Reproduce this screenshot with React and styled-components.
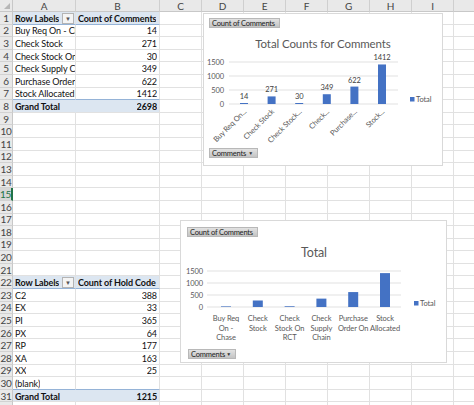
import React from "react";
import styled, { createGlobalStyle } from "styled-components";

const GlobalStyle = createGlobalStyle`
  html, body {
    margin: 0;
    padding: 0;
    background: #ffffff;
    overflow: hidden;
  }
  body {
    font-family: Lato, "Noto Sans", "Liberation Sans", sans-serif;
  }
`;

const COLS = ["A", "B", "C", "D", "E", "F", "G", "H", "I", ""];
const ROW_COUNT = 32;

const commentRows = [
  ["Buy Req On - Chase", 14],
  ["Check Stock", 271],
  ["Check Stock On RCT", 30],
  ["Check Supply Chain", 349],
  ["Purchase Order On", 622],
  ["Stock Allocated", 1412],
];

const holdRows = [
  ["C2", 388],
  ["EX", 33],
  ["PI", 365],
  ["PX", 64],
  ["RP", 177],
  ["XA", 163],
  ["XX", 25],
  ["(blank)", ""],
];

// what sits in columns A and B, keyed by row number
const buildCells = () => {
  const cells = {};
  cells[1] = { kind: "head", a: "Row Labels", b: "Count of Comments" };
  commentRows.forEach(([label, n], i) => {
    cells[2 + i] = { kind: "body", a: label, b: n };
  });
  cells[8] = { kind: "total", a: "Grand Total", b: 2698 };
  cells[22] = { kind: "head", a: "Row Labels", b: "Count of Hold Code" };
  holdRows.forEach(([label, n], i) => {
    cells[23 + i] = { kind: "body", a: label, b: n };
  });
  cells[31] = { kind: "total", a: "Grand Total", b: 1215 };
  return cells;
};

const Sheet = styled.div`
  position: relative;
  display: grid;
  grid-template-columns: 13px 63px 84px 42px repeat(6, 42px) 60px;
  grid-template-rows: 12px repeat(${ROW_COUNT}, 12.6px);
  width: 474px;
  height: 405px;
  overflow: hidden;
  font-size: 9px;
  letter-spacing: -0.1px;
  color: #111111;
`;

const Corner = styled.div`
  position: relative;
  background: #e9e9e9;
  border-right: 1px solid #c8c8c8;
  border-bottom: 1px solid #c8c8c8;
  box-sizing: border-box;

  &::after {
    content: "";
    position: absolute;
    right: 2px;
    bottom: 2px;
    border-left: 6px solid transparent;
    border-bottom: 6px solid #b7b7b7;
  }
`;

const ColHead = styled.div`
  display: flex;
  align-items: center;
  justify-content: center;
  background: #e9e9e9;
  border-right: 1px solid #cfcfcf;
  border-bottom: 1px solid #c8c8c8;
  box-sizing: border-box;
  color: #444444;
  font-size: 10px;
`;

const RowHead = styled.div`
  display: flex;
  align-items: center;
  justify-content: center;
  background: ${(p) => (p.$active ? "#d6d6d6" : "#e9e9e9")};
  border-right: ${(p) => (p.$active ? "2px solid #217346" : "1px solid #c8c8c8")};
  border-bottom: 1px solid #d2d2d2;
  box-sizing: border-box;
  color: ${(p) => (p.$active ? "#217346" : "#444444")};
  font-size: 10px;
  letter-spacing: -0.4px;
`;

const bandBg = "#dce6f1";
const bandLine = "#95b3d7";

const Cell = styled.div`
  display: flex;
  align-items: center;
  justify-content: ${(p) => (p.$right ? "flex-end" : "space-between")};
  padding: 1px ${(p) => (p.$right || p.$band === "head" ? "2px" : "0")} 0 2px;
  box-sizing: border-box;
  white-space: nowrap;
  overflow: hidden;
  font-weight: ${(p) => (p.$band ? 700 : 400)};
  background: ${(p) => (p.$band ? bandBg : "#ffffff")};
  border-right: 1px solid ${(p) => (p.$band === "total" && !p.$right ? bandBg : "#e1e1e1")};
  border-bottom: 1px solid ${(p) => (p.$band === "head" ? bandLine : "#e1e1e1")};
  border-top: ${(p) => (p.$band === "total" ? `1px solid ${bandLine}` : "none")};
  margin-top: ${(p) => (p.$band === "total" ? "-1px" : "0")};
`;

const CellText = styled.span`
  overflow: hidden;
  min-width: 0;
`;

const FilterButton = styled.span`
  display: inline-flex;
  flex: none;
  align-items: center;
  justify-content: center;
  width: 10px;
  height: 9px;
  margin-right: -1px;
  background: #f4f4f4;
  border: 1px solid #b4b4b4;
  color: #555555;
  font-size: 6px;
  font-weight: 400;
`;

const ChartBox = styled.div`
  position: absolute;
  left: ${(p) => p.$x}px;
  top: ${(p) => p.$y}px;
  width: ${(p) => p.$w}px;
  height: ${(p) => p.$h}px;
  display: flex;
  flex-direction: column;
  padding-top: ${(p) => p.$pad}px;
  box-sizing: border-box;
  background: #ffffff;
  border: 1px solid #d9d9d9;
`;

const FieldButton = styled.div`
  display: flex;
  align-items: center;
  justify-content: space-between;
  width: ${(p) => p.$w}px;
  height: 10px;
  margin-left: ${(p) => p.$left}px;
  padding: 0 4px 0 2px;
  box-sizing: border-box;
  background: linear-gradient(#e2e2e2, #c4c4c4);
  border: 1px solid #b8b8b8;
  color: #222222;
  font-size: 7.5px;
  letter-spacing: -0.2px;
  white-space: nowrap;
`;

const Caret = styled.span`
  font-size: 5px;
  color: #333333;
`;

const Plot = styled.svg`
  display: block;
  flex: none;
`;

const axisFont = { fontSize: 7.5, fill: "#595959", fontFamily: "Lato, Noto Sans, sans-serif" };

const CommentsChart = () => {
  const base = 76;
  const perUnit = 42 / 1500;
  const ticks = [0, 500, 1000, 1500];
  const labels = ["Buy Req On...", "Check Stock", "Check Stock...", "Check...", "Purchase...", "Stock..."];
  return (
    <ChartBox $x={203} $y={13} $w={240} $h={153} $pad={4}>
      <FieldButton $w={71} $left={5}>Count of Comments</FieldButton>
      <Plot width={238} height={120} viewBox="0 0 238 120">
        <text x={119} y={20} textAnchor="middle" style={{ ...axisFont, fontSize: 11.5 }}>
          Total Counts for Comments
        </text>
        {ticks.map((t) => {
          const y = base - t * perUnit;
          return (
            <g key={t}>
              <line x1={25} x2={194} y1={y} y2={y} stroke="#d9d9d9" strokeWidth={0.8} />
              <text x={20} y={y + 2.5} textAnchor="end" style={axisFont}>{t}</text>
            </g>
          );
        })}
        {commentRows.map(([, n], i) => {
          const cx = 40 + i * 27.6;
          const h = Math.max(n * perUnit, 1);
          return (
            <g key={i}>
              <rect x={cx - 4} y={base - h} width={8} height={h} fill="#4472c4" />
              <text x={cx} y={base - h - 4} textAnchor="middle" style={{ ...axisFont, fill: "#404040" }}>{n}</text>
              <text
                x={cx + 3}
                y={base + 8}
                textAnchor="end"
                transform={`rotate(-45 ${cx + 3} ${base + 8})`}
                style={axisFont}
              >
                {labels[i]}
              </text>
            </g>
          );
        })}
        <rect x={206} y={69} width={4.5} height={4.5} fill="#4472c4" />
        <text x={212} y={74} style={axisFont}>Total</text>
      </Plot>
      <FieldButton $w={49} $left={5}>
        Comments <Caret>▼</Caret>
      </FieldButton>
    </ChartBox>
  );
};

const wrapped = [
  ["Buy Req", "On -", "Chase"],
  ["Check", "Stock"],
  ["Check", "Stock On", "RCT"],
  ["Check", "Supply", "Chain"],
  ["Purchase", "Order On"],
  ["Stock", "Allocated"],
];

const TotalChart = () => {
  const base = 70;
  const perUnit = 36 / 1500;
  const ticks = [0, 500, 1000, 1500];
  return (
    <ChartBox $x={180} $y={220} $w={267} $h={143} $pad={6}>
      <FieldButton $w={71} $left={6}>Count of Comments</FieldButton>
      <Plot width={265} height={112} viewBox="0 0 265 112">
        <text x={133} y={20} textAnchor="middle" style={{ ...axisFont, fontSize: 12.5 }}>
          Total
        </text>
        {ticks.map((t) => {
          const y = base - t * perUnit;
          return (
            <g key={t}>
              <line x1={26} x2={220} y1={y} y2={y} stroke="#d9d9d9" strokeWidth={0.8} />
              <text x={22} y={y + 2.5} textAnchor="end" style={axisFont}>{t}</text>
            </g>
          );
        })}
        {commentRows.map(([, n], i) => {
          const cx = 45 + i * 31.8;
          const h = Math.max(n * perUnit, 0.6);
          return (
            <g key={i}>
              <rect x={cx - 5} y={base - h} width={10} height={h} fill="#4472c4" />
              {wrapped[i].map((line, j) => (
                <text key={j} x={cx} y={base + 14 + j * 9.5} textAnchor="middle" style={axisFont}>
                  {line}
                </text>
              ))}
            </g>
          );
        })}
        <rect x={233} y={64} width={4.5} height={4.5} fill="#4472c4" />
        <text x={239} y={69} style={axisFont}>Total</text>
      </Plot>
      <FieldButton $w={48} $left={7}>
        Comments <Caret>▼</Caret>
      </FieldButton>
    </ChartBox>
  );
};

const App = () => {
  const cells = buildCells();
  const rows = Array.from({ length: ROW_COUNT }, (_, i) => i + 1);
  return (
    <>
      <GlobalStyle />
      <Sheet>
        <Corner />
        {COLS.map((c, i) => (
          <ColHead key={i}>{c}</ColHead>
        ))}
        {rows.map((r) => {
          const data = cells[r];
          const band = data && data.kind !== "body" ? data.kind : undefined;
          return (
            <React.Fragment key={r}>
              <RowHead $active={r === 15}>{r}</RowHead>
              <Cell $band={band}>
                <CellText>{data ? data.a : ""}</CellText>
                {band === "head" && <FilterButton>▼</FilterButton>}
              </Cell>
              <Cell $band={band} $right={data && data.kind !== "head"}>
                <CellText>{data ? data.b : ""}</CellText>
              </Cell>
              {COLS.slice(2).map((c, i) => (
                <Cell key={i} />
              ))}
            </React.Fragment>
          );
        })}
        <CommentsChart />
        <TotalChart />
      </Sheet>
    </>
  );
};

export default App;
